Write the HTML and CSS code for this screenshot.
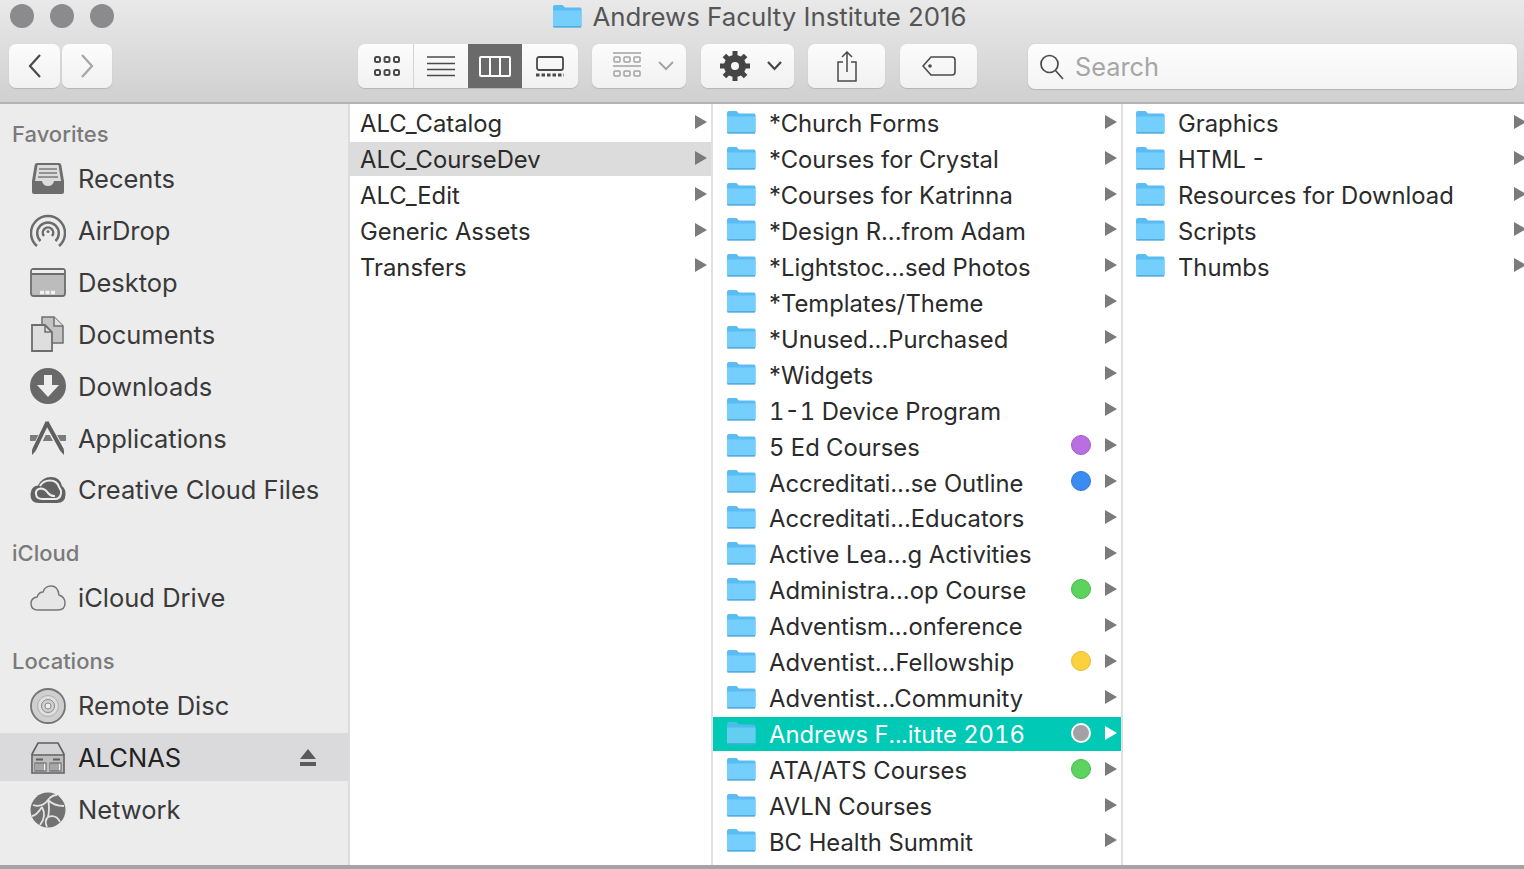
FILE: index.html
```html
<!DOCTYPE html>
<html lang="en">
<head>
<meta charset="utf-8">
<title>Andrews Faculty Institute 2016</title>
<link rel="stylesheet" href="styles.css">
</head>
<body>
<svg class="defs" width="0" height="0" aria-hidden="true">
  <symbol id="folder" viewBox="0 0 30 24">
    <path d="M1 3Q1 1 3 1H10.500L13 3.500H28Q29.500 3.500 29.500 5V22Q29.500 23.500 28 23.500H2.500Q1 23.500 1 22Z" fill="#5abcf2"/>
    <path d="M1 6.500H29.500V22Q29.500 23 28 23H2.500Q1 23 1 22Z" fill="#74cffc"/>
    <path d="M1.500 22.800H29" stroke="#4aa3d8" stroke-width="1.200"/>
  </symbol>
  <symbol id="arrow" viewBox="0 0 12 14"><path d="M0 0L12 7L0 14Z" fill="currentColor"/></symbol>
</svg>

<header class="toolbar">
  <div class="titlerow">
    <div class="lights"><span class="light"></span><span class="light"></span><span class="light"></span></div>
    <div class="title">
      <svg class="title-folder"><use href="#folder"/></svg>
      <span>Andrews Faculty Institute 2016</span>
    </div>
  </div>
  <div class="tools">
    <div class="seg nav">
      <button class="btn back"><svg width="16" height="26" viewBox="0 0 16 26"><path d="M13 2L3 13L13 24" fill="none" stroke="#4a4a4a" stroke-width="2.200"/></svg></button>
      <button class="btn fwd"><svg width="16" height="26" viewBox="0 0 16 26"><path d="M3 2L13 13L3 24" fill="none" stroke="#a5a5a5" stroke-width="2.200"/></svg></button>
    </div>
    <div class="seg views">
      <button class="vbtn v1"><svg width="28" height="22" viewBox="0 0 28 22" fill="none" stroke="#4a4a4a" stroke-width="2"><rect x="2" y="2" width="5" height="5" rx="1.500"/><rect x="11.500" y="2" width="5" height="5" rx="1.500"/><rect x="21" y="2" width="5" height="5" rx="1.500"/><rect x="2" y="15" width="5" height="5" rx="1.500"/><rect x="11.500" y="15" width="5" height="5" rx="1.500"/><rect x="21" y="15" width="5" height="5" rx="1.500"/></svg></button>
      <button class="vbtn v2"><svg width="30" height="22" viewBox="0 0 30 22" stroke="#4a4a4a" stroke-width="1.600"><path d="M1 2H29M1 8.500H29M1 14.500H29M1 20.500H29"/></svg></button>
      <button class="vbtn v3 on"><svg width="32" height="21" viewBox="0 0 32 21" fill="none" stroke="#fff" stroke-width="2"><rect x="1" y="1" width="30" height="19" rx="1"/><path d="M11 1V20M21 1V20"/></svg></button>
      <button class="vbtn v4"><svg width="30" height="22" viewBox="0 0 30 22" fill="none" stroke="#4a4a4a" stroke-width="1.800"><rect x="2" y="2" width="26" height="13" rx="2"/><path d="M1 20H29" stroke-width="3" stroke-dasharray="3.500 2"/></svg></button>
    </div>
    <button class="btn group"><svg width="30" height="28" viewBox="0 0 30 28" fill="none" stroke="#a3a3a3" stroke-width="1.500"><path d="M1 1H29M1 14H29"/><rect x="2" y="5" width="6" height="5" rx="1"/><rect x="12" y="5" width="6" height="5" rx="1"/><rect x="22" y="5" width="6" height="5" rx="1"/><rect x="2" y="19" width="6" height="5" rx="1"/><rect x="12" y="19" width="6" height="5" rx="1"/><rect x="22" y="19" width="6" height="5" rx="1"/></svg><svg width="16" height="10" viewBox="0 0 16 10"><path d="M1 1L8 8L15 1" fill="none" stroke="#a5a5a5" stroke-width="2"/></svg></button>
    <button class="btn action"><svg width="30" height="30" viewBox="0 0 30 30"><circle cx="15" cy="15" r="7.500" fill="none" stroke="#454545" stroke-width="7"/><g stroke="#454545" stroke-width="5"><path d="M15 0V6M15 24V30M0 15H6M24 15H30M4.400 4.400L8.600 8.600M21.400 21.400L25.600 25.600M25.600 4.400L21.400 8.600M8.600 21.400L4.400 25.600"/></g></svg><svg width="15" height="10" viewBox="0 0 15 10"><path d="M1 1L7.500 8L14 1" fill="none" stroke="#454545" stroke-width="2.200"/></svg></button>
    <button class="btn share"><svg width="22" height="31" viewBox="0 0 22 31" fill="none" stroke="#4a4a4a" stroke-width="1.500"><path d="M7 11H2V30H20V11H15"/><path d="M11 21V1M6 6L11 1L16 6"/></svg></button>
    <button class="btn tag"><svg width="34" height="20" viewBox="0 0 34 20" fill="none" stroke="#4a4a4a" stroke-width="1.600"><path d="M9 1H30Q33 1 33 4V16Q33 19 30 19H9L1 10Z"/><circle cx="8" cy="10" r="1" fill="#4a4a4a"/></svg></button>
    <div class="search">
      <svg width="26" height="28" viewBox="0 0 26 28" fill="none" stroke="#4a4a4a" stroke-width="1.700"><circle cx="10.500" cy="11" r="8.500"/><path d="M16.500 17.500L24 26"/></svg>
      <span>Search</span>
    </div>
  </div>
</header>

<main class="browser">
  <nav class="sidebar">
    <h2 class="side-head first">Favorites</h2>
    <a class="side-item"><svg class="ic" viewBox="0 0 36 36"><path d="M7 2H29Q31 2 31.300 4L34 20V31Q34 33 32 33H4Q2 33 2 31V20L4.700 4Q5 2 7 2Z" fill="#6d6d6d"/><path d="M7.500 4H28.500L31 20H5Z" fill="#dcdcdc"/><path d="M9 8H27M9 12H27M8 16H28" stroke="#7a7a7a" stroke-width="1.500"/><path d="M12 20Q13 25 18 25T24 20Z" fill="#dcdcdc"/></svg>Recents</a>
    <a class="side-item"><svg class="ic" viewBox="0 0 36 36" fill="none" stroke="#6c6c6c" stroke-width="2.500"><path d="M7 33A17 17 0 1 1 29 33"/><path d="M10.500 28A10.800 10.800 0 1 1 25.500 28"/><path d="M14 23A5.200 5.200 0 1 1 22 23"/><circle cx="18" cy="18.500" r="1.500" fill="#6c6c6c" stroke="none"/></svg>AirDrop</a>
    <a class="side-item"><svg class="ic" viewBox="0 0 36 30"><rect x="1" y="1" width="34" height="27" rx="2.500" fill="#bcbcbc" stroke="#6d6d6d" stroke-width="1.800"/><path d="M1 6H35" stroke="#6d6d6d" stroke-width="1.800"/><path d="M2 2H34V5H2Z" fill="#eee"/><path d="M10 24.500H26" stroke="#f2f2f2" stroke-width="3.500" stroke-dasharray="4 1.500"/></svg>Desktop</a>
    <a class="side-item"><svg class="ic" viewBox="0 0 36 36"><path d="M12 1H24L33 10V27H12Z" fill="#c4c4c4" stroke="#6d6d6d" stroke-width="1.500"/><path d="M24 1V10H33" fill="#e0e0e0" stroke="#6d6d6d" stroke-width="1.500"/><path d="M2 9H15L22 16V35H2Z" fill="#dedede" stroke="#6d6d6d" stroke-width="1.800"/><path d="M15 9V16H22" fill="none" stroke="#6d6d6d" stroke-width="1.500"/></svg>Documents</a>
    <a class="side-item"><svg class="ic" viewBox="0 0 36 36"><circle cx="18" cy="18" r="18" fill="#696969"/><path d="M14 7H22V17H29L18 29L7 17H14Z" fill="#eee"/></svg>Downloads</a>
    <a class="side-item"><svg class="ic" viewBox="0 0 36 36"><path d="M0 15H36V21H0Z" fill="#7c7c7c"/><g fill="none"><path d="M18 3L4 31M17 3L32 31" stroke="#ececec" stroke-width="6.500"/><path d="M17.500 2L4 30" stroke="#5f5f5f" stroke-width="4"/><path d="M16.500 2L32 30" stroke="#5f5f5f" stroke-width="4"/></g><path d="M2.100 29L5.900 30.800L2 35ZM33.900 29L30.100 30.800L34 35Z" fill="#5f5f5f"/></svg>Applications</a>
    <a class="side-item"><svg class="ic" viewBox="0 0 36 28"><path d="M9 27Q0 27 .5 18Q1 10 8 9.500Q12 1 21 1Q30 1 32 10Q36 13 35.500 19Q35 27 27 27Z" fill="#626262"/><path d="M10 10Q13 4.500 20 4.500Q27 4.500 29 11Q31.500 14 31 17.500Q30 23 25 23H12Q6.500 23 6 18Q5.500 13 10.500 12.500Q15 12.500 18 17Q21 20.500 25 20" fill="none" stroke="#ededed" stroke-width="2"/></svg>Creative Cloud Files</a>

    <h2 class="side-head cloud">iCloud</h2>
    <a class="side-item"><svg class="ic" viewBox="0 0 36 26"><path d="M8 25Q1 25 1 18.500Q1 13 7 12Q9 7 13 7Q15 1 21 1Q28 1 29 10Q35 12 35 18Q35 25 28 25Z" fill="#e6e6e6" stroke="#777" stroke-width="1.500"/></svg>iCloud Drive</a>

    <h2 class="side-head loc">Locations</h2>
    <a class="side-item"><svg class="ic" viewBox="0 0 36 36"><circle cx="18" cy="18" r="17" fill="#cfcfcf" stroke="#757575" stroke-width="1.800"/><circle cx="18" cy="18" r="10.500" fill="#dedede" stroke="#b0b0b0"/><circle cx="18" cy="18" r="6.500" fill="#d0d0d0" stroke="#8a8a8a"/><circle cx="18" cy="18" r="3" fill="#ececec" stroke="#8a8a8a"/></svg>Remote Disc</a>
    <a class="side-item sel"><svg class="ic" viewBox="0 0 36 32"><path d="M8 1H28L34 12V31H2V12Z" fill="#d4d4d4" stroke="#5f5f5f" stroke-width="1.600"/><path d="M2 13H34" stroke="#5f5f5f" stroke-width="1.500"/><rect x="3" y="14" width="30" height="16" fill="#bdbdbd"/><path d="M6 17.500H13M23 17.500H30" stroke="#5f5f5f" stroke-width="2"/><rect x="5" y="21" width="11" height="8" fill="#eee" stroke="#5f5f5f"/><rect x="20" y="21" width="11" height="8" fill="#eee" stroke="#5f5f5f"/><path d="M7 21V29M9 21V29M11 21V29M13 21V29M22 21V29M24 21V29M26 21V29M28 21V29" stroke="#5f5f5f"/></svg>ALCNAS<svg class="eject" width="18" height="18" viewBox="0 0 18 18"><path d="M9 0L17 10H1Z M1 13H17V17H1Z" fill="#5a5a5a"/></svg></a>
    <a class="side-item"><svg class="ic" viewBox="0 0 36 36"><circle cx="18" cy="18" r="17.500" fill="#727272"/><path d="M3 13Q12 16 18 8Q22 3 27 3M18 8Q24 14 34 14M12 15Q17 24 10 33M12 15Q6 24 2 24M18 25Q26 22 30 30M18 25Q14 29 17 35M18 8Q20 16 18 25" fill="none" stroke="#e4e4e4" stroke-width="1.800"/></svg>Network</a>
  </nav>

  <section class="col c1">
    <div class="row"><span class="name">ALC_Catalog</span><svg class="arr"><use href="#arrow"/></svg></div>
    <div class="row cur"><span class="name">ALC_CourseDev</span><svg class="arr"><use href="#arrow"/></svg></div>
    <div class="row"><span class="name">ALC_Edit</span><svg class="arr"><use href="#arrow"/></svg></div>
    <div class="row"><span class="name">Generic Assets</span><svg class="arr"><use href="#arrow"/></svg></div>
    <div class="row"><span class="name">Transfers</span><svg class="arr"><use href="#arrow"/></svg></div>
  </section>

  <section class="col c2">
    <div class="row"><svg class="fld"><use href="#folder"/></svg><span class="name">*Church Forms</span><svg class="arr"><use href="#arrow"/></svg></div>
    <div class="row"><svg class="fld"><use href="#folder"/></svg><span class="name">*Courses for Crystal</span><svg class="arr"><use href="#arrow"/></svg></div>
    <div class="row"><svg class="fld"><use href="#folder"/></svg><span class="name">*Courses for Katrinna</span><svg class="arr"><use href="#arrow"/></svg></div>
    <div class="row"><svg class="fld"><use href="#folder"/></svg><span class="name">*Design R...from Adam</span><svg class="arr"><use href="#arrow"/></svg></div>
    <div class="row"><svg class="fld"><use href="#folder"/></svg><span class="name">*Lightstoc...sed Photos</span><svg class="arr"><use href="#arrow"/></svg></div>
    <div class="row"><svg class="fld"><use href="#folder"/></svg><span class="name">*Templates/Theme</span><svg class="arr"><use href="#arrow"/></svg></div>
    <div class="row"><svg class="fld"><use href="#folder"/></svg><span class="name">*Unused...Purchased</span><svg class="arr"><use href="#arrow"/></svg></div>
    <div class="row"><svg class="fld"><use href="#folder"/></svg><span class="name">*Widgets</span><svg class="arr"><use href="#arrow"/></svg></div>
    <div class="row"><svg class="fld"><use href="#folder"/></svg><span class="name num">1-1 Device Program</span><svg class="arr"><use href="#arrow"/></svg></div>
    <div class="row"><svg class="fld"><use href="#folder"/></svg><span class="name num">5 Ed Courses</span><i class="dot purple"></i><svg class="arr"><use href="#arrow"/></svg></div>
    <div class="row"><svg class="fld"><use href="#folder"/></svg><span class="name">Accreditati...se Outline</span><i class="dot blue"></i><svg class="arr"><use href="#arrow"/></svg></div>
    <div class="row"><svg class="fld"><use href="#folder"/></svg><span class="name">Accreditati...Educators</span><svg class="arr"><use href="#arrow"/></svg></div>
    <div class="row"><svg class="fld"><use href="#folder"/></svg><span class="name">Active Lea...g Activities</span><svg class="arr"><use href="#arrow"/></svg></div>
    <div class="row"><svg class="fld"><use href="#folder"/></svg><span class="name">Administra...op Course</span><i class="dot green"></i><svg class="arr"><use href="#arrow"/></svg></div>
    <div class="row"><svg class="fld"><use href="#folder"/></svg><span class="name">Adventism...onference</span><svg class="arr"><use href="#arrow"/></svg></div>
    <div class="row"><svg class="fld"><use href="#folder"/></svg><span class="name">Adventist...Fellowship</span><i class="dot yellow"></i><svg class="arr"><use href="#arrow"/></svg></div>
    <div class="row"><svg class="fld"><use href="#folder"/></svg><span class="name">Adventist...Community</span><svg class="arr"><use href="#arrow"/></svg></div>
    <div class="row active"><svg class="fld"><use href="#folder"/></svg><span class="name num">Andrews F...itute 2016</span><i class="dot gray"></i><svg class="arr"><use href="#arrow"/></svg></div>
    <div class="row"><svg class="fld"><use href="#folder"/></svg><span class="name">ATA/ATS Courses</span><i class="dot green"></i><svg class="arr"><use href="#arrow"/></svg></div>
    <div class="row"><svg class="fld"><use href="#folder"/></svg><span class="name">AVLN Courses</span><svg class="arr"><use href="#arrow"/></svg></div>
    <div class="row"><svg class="fld"><use href="#folder"/></svg><span class="name">BC Health Summit</span><svg class="arr"><use href="#arrow"/></svg></div>
  </section>

  <section class="col c3">
    <div class="row"><svg class="fld"><use href="#folder"/></svg><span class="name">Graphics</span><svg class="arr"><use href="#arrow"/></svg></div>
    <div class="row"><svg class="fld"><use href="#folder"/></svg><span class="name">HTML -</span><svg class="arr"><use href="#arrow"/></svg></div>
    <div class="row"><svg class="fld"><use href="#folder"/></svg><span class="name">Resources for Download</span><svg class="arr"><use href="#arrow"/></svg></div>
    <div class="row"><svg class="fld"><use href="#folder"/></svg><span class="name">Scripts</span><svg class="arr"><use href="#arrow"/></svg></div>
    <div class="row"><svg class="fld"><use href="#folder"/></svg><span class="name">Thumbs</span><svg class="arr"><use href="#arrow"/></svg></div>
  </section>
</main>
<div class="statusline"></div>
</body>
</html>
```

FILE: styles.css
```css
* { box-sizing: border-box; }
html, body { margin: 0; height: 100%; overflow: hidden; }
body {
  width: 1524px;
  height: 869px;
  font-family: "Inter", "Liberation Sans", sans-serif;
  color: #2b2b2b;
  background: #fff;
  display: flex;
  flex-direction: column;
}
.defs { position: absolute; }
button { font: inherit; padding: 0; border: 0; }

.toolbar {
  height: 104px;
  flex: none;
  background: linear-gradient(#e9e9e9, #d0d0d0);
  border-bottom: 2px solid #b3b3b3;
}
.titlerow { height: 44px; position: relative; display: flex; justify-content: center; }
.lights { position: absolute; left: 10px; top: 4px; display: flex; gap: 16px; }
.light { width: 24px; height: 24px; border-radius: 50%; background: #8b8b8e; }
.title {
  display: flex;
  align-items: flex-start;
  gap: 10px;
  margin-right: 5px;
  padding-top: 2px;
  font-size: 25.800px;
  line-height: 30px;
  color: #555;
}
.title-folder { width: 30px; height: 24px; margin-top: 2px; }

.tools { display: flex; align-items: flex-start; padding-left: 9px; height: 44px; }
.btn, .seg, .search { border-radius: 7px; }
.btn {
  height: 44px;
  background: linear-gradient(#fcfcfc, #f1f1f1);
  box-shadow: 0 1px 1px #b4b4b4;
  display: flex;
  align-items: center;
  justify-content: center;
}
.nav { display: flex; gap: 2px; margin-right: 246px; }
.back { width: 51px; }
.fwd { width: 50px; }
.views {
  width: 220px;
  height: 44px;
  display: flex;
  overflow: hidden;
  background: linear-gradient(#fcfcfc, #f1f1f1);
  box-shadow: 0 1px 1px #b4b4b4;
  margin-right: 14px;
}
.vbtn { background: none; display: flex; align-items: center; justify-content: center; }
.v1 { width: 56px; border-right: 1px solid #d4d4d4; padding-left: 2px; }
.v2 { width: 54px; }
.v3 { width: 54px; padding-right: 1px; }
.v4 { width: 56px; }
.vbtn.on { background: #6a6a6a; }
.group { width: 94px; gap: 16px; margin-right: 15px; padding-left: 8px; }
.action { width: 93px; gap: 17px; margin-right: 14px; padding-left: 6px; }
.share { width: 77px; margin-right: 15px; }
.tag { width: 77px; margin-right: 51px; }
.search {
  width: 489px;
  height: 45px;
  background: linear-gradient(#fdfdfd, #f4f4f4);
  box-shadow: 0 0 1px #a8a8a8, 0 1px 1px #b4b4b4;
  display: flex;
  align-items: center;
  gap: 10px;
  padding-left: 11px;
  font-size: 25.300px;
  color: #a6a6a6;
}

.browser { flex: 1; display: flex; min-height: 0; overflow: hidden; }
.sidebar {
  width: 350px;
  flex: none;
  background: #ececec;
  border-right: 2px solid #dcdcdc;
}
.side-head {
  margin: 0;
  padding-left: 12px;
  font-size: 22px;
  font-weight: 500;
  line-height: 26px;
  color: #7a7a7a;
}
.first { margin-top: 17px; margin-bottom: 6px; }
.cloud { margin-top: 24.200px; margin-bottom: 6px; }
.loc { margin-top: 24px; margin-bottom: 6px; }
.side-item {
  height: 51.830px;
  display: flex;
  align-items: center;
  padding-left: 30px;
  font-size: 25.500px;
  color: #3a3a3a;
}
.side-item.sel {
  background: #dadadc;
  color: #222;
  height: 48px;
  margin: 1.200px 0 3px;
  padding-top: 2px;
}
.ic { width: 36px; height: 36px; margin-right: 12px; flex: none; }
.eject { margin-left: auto; margin-right: 31px; }

.col { padding-top: 1.700px; flex: none; }
.c1 { width: 363px; border-right: 2px solid #e1e1e1; }
.c2 { width: 410px; border-right: 2px solid #e1e1e1; }
.c3 { flex: 1; }
.row {
  height: 35.950px;
  display: flex;
  align-items: center;
  font-size: 23.800px;
  color: #2b2b2b;
}
.c1 .row { padding-left: 10px; }
.c1 .row.cur { background: #dcdcdc; height: 34px; margin: 0 0 2px; padding-top: 2px; }
.c2 .row { padding-left: 13px; }
.c3 .row { padding-left: 12px; }
.fld { width: 30px; height: 24px; flex: none; margin: 0 13px 4px 0; }
.c3 .fld { margin-right: 13px; }
.name { white-space: nowrap; flex: 1; }
.num { font-feature-settings: "tnum"; }
.arr { width: 12px; height: 14px; flex: none; margin: 0 4px 4px 0; color: #7b7b7b; }
.c3 .arr { margin-right: -2px; }
.dot {
  width: 20px;
  height: 20px;
  border-radius: 50%;
  flex: none;
  margin: 0 14px 4px 0;
}
.purple { background: #b96fe0; border: 1px solid #a45bcb; }
.blue { background: #3a8cf2; border: 1px solid #2d76d4; }
.green { background: #5cd35f; border: 1px solid #45b84a; }
.yellow { background: #fbd13e; border: 1px solid #e6bc30; }
.gray { background: #a2a2a6; border: 2px solid #fff; }
.row.active { background: #00c9b5; color: #fff; height: 34px; margin: 0 0 2px; padding-top: 2px; }
.row.active .arr { color: #fff; }
.row.active .fld { opacity: .85; }
.statusline { height: 4px; flex: none; background: #a4a4a4; }
```
